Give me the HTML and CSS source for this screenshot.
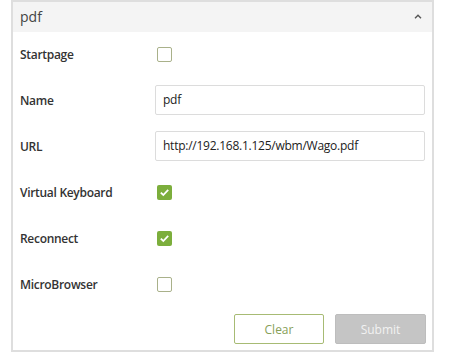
FILE: index.html
```html
<!DOCTYPE html>
<html>
<head>
<meta charset="utf-8">
<link rel="stylesheet" href="styles.css">
</head>
<body>
<div class="panel">
  <div class="panel-header">
    <span class="title">pdf</span>
    <svg class="caret" width="8" height="5" viewBox="0 0 8 5"><path d="M1 4.2 L4 1.2 L7 4.2" fill="none" stroke="#555" stroke-width="1.4"/></svg>
  </div>
  <div class="panel-body">
    <div class="row">
      <span class="label">Startpage</span>
      <span class="check"></span>
    </div>
    <div class="row">
      <span class="label">Name</span>
      <div class="input">pdf</div>
    </div>
    <div class="row">
      <span class="label">URL</span>
      <div class="input">http://192.168.1.125/wbm/Wago.pdf</div>
    </div>
    <div class="row">
      <span class="label">Virtual Keyboard</span>
      <span class="check on"><svg width="15" height="15" viewBox="0 0 15 15"><path d="M3.8 7.6 L6.3 10 L11.2 4.9" fill="none" stroke="#fff" stroke-width="1.8"/></svg></span>
    </div>
    <div class="row">
      <span class="label">Reconnect</span>
      <span class="check on"><svg width="15" height="15" viewBox="0 0 15 15"><path d="M3.8 7.6 L6.3 10 L11.2 4.9" fill="none" stroke="#fff" stroke-width="1.8"/></svg></span>
    </div>
    <div class="row">
      <span class="label">MicroBrowser</span>
      <span class="check"></span>
    </div>
    <div class="actions">
      <button class="btn clear">Clear</button>
      <button class="btn submit">Submit</button>
    </div>
  </div>
</div>
</body>
</html>
```
FILE: styles.css
```css
html, body {
  margin: 0;
  padding: 0;
  background: #fff;
}
body {
  font-family: "Open Sans", "Noto Sans", sans-serif;
  color: #333;
}
.panel {
  margin-left: 11px;
  width: 419px;
  border: 2px solid #dedede;
  background: #fff;
}
.panel-header {
  height: 30px;
  background: #f4f4f4;
  display: flex;
  align-items: center;
  justify-content: space-between;
  padding: 0 10px 0 7px;
}
.title {
  font-size: 14px;
  color: #444;
  margin-top: -2px;
}
.caret {
  display: block;
  margin-top: -1px;
}
.panel-body {
  padding: 7px 7px 6px 7px;
  display: flex;
  flex-direction: column;
  gap: 16px;
}
.row {
  height: 30px;
  display: grid;
  grid-template-columns: 135px 1fr;
  align-items: center;
}
.label {
  font-size: 12px;
  font-weight: 600;
  letter-spacing: -0.3px;
  color: #333;
}
.check {
  width: 13px;
  height: 13px;
  margin-left: 2px;
  border: 1px solid #a9b18a;
  border-radius: 2px;
  background: #fff;
}
.check.on {
  width: 15px;
  height: 15px;
  border: none;
  background: #7cae3c;
}
.check svg {
  display: block;
}
.input {
  height: 28px;
  border: 1px solid #dcdcdc;
  border-radius: 2px;
  font-size: 12px;
  letter-spacing: -0.25px;
  color: #222;
  line-height: 28px;
  padding-left: 7px;
}
.actions {
  display: flex;
  justify-content: flex-end;
  gap: 11px;
  margin-top: -1px;
  margin-right: -1px;
}
.btn {
  width: 90px;
  height: 30px;
  font-family: "Open Sans", "Noto Sans", sans-serif;
  font-size: 12px;
  border-radius: 2px;
  padding: 0;
}
.btn.clear {
  background: #fff;
  border: 1px solid #a7bb74;
  color: #87a058;
}
.btn.submit {
  width: 91px;
  background: #c5c5c5;
  border: 1px solid #bdbdbd;
  color: #f2f2f2;
}
```
